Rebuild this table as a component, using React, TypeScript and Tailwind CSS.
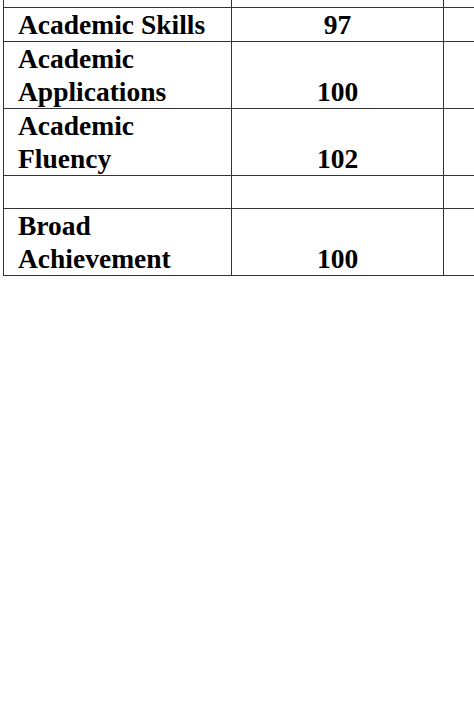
const rows: { label: string[]; score: string; h: string }[] = [
  { label: ['Academic Skills'], score: '97', h: 'h-[34px]' },
  { label: ['Academic', 'Applications'], score: '100', h: 'h-[67px]' },
  { label: ['Academic', 'Fluency'], score: '102', h: 'h-[67px]' },
  { label: [], score: '', h: 'h-[33px]' },
  { label: ['Broad', 'Achievement'], score: '100', h: 'h-[67px]' },
]

export default function App() {
  return (
    <div className="w-[474px] h-[705px] overflow-hidden bg-white">
      <table
        className="ml-[3px] w-[600px] table-fixed border-collapse text-black font-bold text-[27.5px] leading-[33px]"
        style={{ fontFamily: '"Liberation Serif", "Times New Roman", serif' }}
      >
        <colgroup>
          <col className="w-[228px]" />
          <col className="w-[212px]" />
          <col className="w-[160px]" />
        </colgroup>
        <tbody>
          <tr className="h-[7px]">
            <td className="border-x border-b border-[#333] p-0" />
            <td className="border-x border-b border-[#333] p-0" />
            <td className="border-x border-b border-[#333] p-0" />
          </tr>
          {rows.map((r, i) => (
            <tr key={i} className={r.h}>
              <td className="border border-[#333] pl-[14px] pr-1 py-0 align-top">
                {r.label.map((l) => (
                  <div key={l}>{l}</div>
                ))}
              </td>
              <td className="border border-[#333] p-0 text-center align-bottom">{r.score}</td>
              <td className="border border-[#333] p-0" />
            </tr>
          ))}
        </tbody>
      </table>
    </div>
  )
}
